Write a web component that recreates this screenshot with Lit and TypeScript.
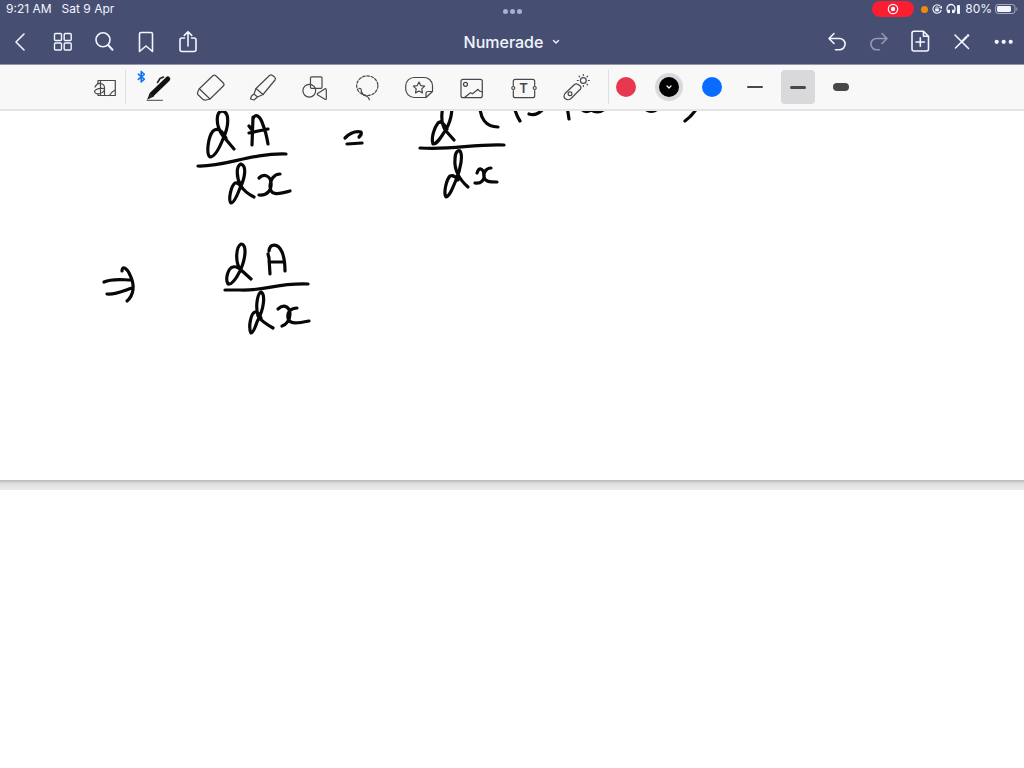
import { LitElement, html, css, svg, SVGTemplateResult } from "lit";
import { customElement, property, state } from "lit/decorators.js";

interface Item {
  label: string;
  icon: SVGTemplateResult;
  dim?: boolean;
}

const leftActions: Item[] = [
  { label: "Back", icon: svg`<path d="M24 14L16 22L24 30"/>` },
  {
    label: "Thumbnails",
    icon: svg`<g stroke-width="1.4"><rect x="12.5" y="13.5" width="7" height="7" rx="1"/><rect x="22.2" y="13.5" width="7" height="7" rx="1"/><rect x="12.5" y="23" width="7" height="7" rx="1"/><rect x="22.2" y="23" width="7" height="7" rx="1"/></g>`,
  },
  { label: "Search", icon: svg`<circle cx="19" cy="19.8" r="7"/><path d="M24 25L28.5 29.7" stroke-width="2"/>` },
  { label: "Bookmark", icon: svg`<path d="M13.5 14q0-1.5 1.5-1.5h10q1.5 0 1.5 1.5V31.5L20 26L13.5 31.5Z"/>` },
  {
    label: "Share",
    icon: svg`<path d="M16.5 18H14q-2 0-2 2V29.5q0 2 2 2H26q2 0 2-2V20q0-2-2-2H23.5M20 26V12M16.3 15.4L20 11.7L23.7 15.4"/>`,
  },
];

const rightActions: Item[] = [
  { label: "Undo", icon: svg`<path d="M18 13.5L13 18.5L18 23.5M13 18.5H23.5a5.6 5.6 0 0 1 0 11.2H19.5"/>` },
  { label: "Redo", dim: true, icon: svg`<path d="M24 13.5L29 18.500L24 23.5M29 18.5H18.500a5.6 5.6 0 0 0 0 11.2H21.5"/>` },
  {
    label: "Add page",
    icon: svg`<path d="M23.5 11.2H14q-2 0-2 2V29q0 2 2 2H26.5q2 0 2-2V16.2ZM23.5 11.5V16.2H28.3M16 22H24.5M20.300 17.8V26.2"/>`,
  },
  {
    label: "Read only",
    icon: svg`<path d="M13 15L26.5 28.5M13.5 28L24.5 17"/><path d="M20.5 21L24.5 17" stroke-width="2.200"/><circle cx="26" cy="15.5" r="1.300" fill="currentColor" stroke="none"/>`,
  },
  {
    label: "More",
    icon: svg`<g fill="currentColor" stroke="none"><circle cx="12.7" cy="21.8" r="2.1"/><circle cx="19.7" cy="21.8" r="2.1"/><circle cx="26.700" cy="21.8" r="2.1"/></g>`,
  },
];

const tools: Item[] = [
  {
    label: "Pen",
    icon: svg`<path d="M9.2 6.5V17L12.300 14.2L6.3 9.2M6.3 14.4L12.3 9.3L9.2 6.5" stroke="#1673f0" stroke-width="1.6"/>
      <path d="M35.8 14L20 29.3" stroke="#111" stroke-width="5"/><path d="M18 27.5L15 34.7L22 31.5Z" fill="#222" stroke="none"/>
      <path d="M25.5 17.500L28 13.5L31.5 12" stroke="#222" stroke-width="1.6"/><path d="M15 35.3H30.5" stroke-width="1"/>`,
  },
  {
    label: "Eraser",
    icon: svg`<path d="M28.800 10.8Q30.3 9.5 31.8 10.8L39.3 18Q40.8 19.5 39.3 21L26 34L15.3 23.7Z"/><path d="M15.3 23.7L13.7 27Q13 28.8 14.3 30L18.5 34Q20 35.3 22 35L26 34"/>`,
  },
  {
    label: "Highlighter",
    icon: svg`<path d="M33.5 10.5Q35 9.3 36.5 10.5L38.8 12.3Q40 13.5 39 15L27 29.5L20 23.5Z"/><path d="M20 23.5L18 29L21.5 32L27 29.5M18 29L15.5 31L14.5 34L18 35L21.5 32"/>`,
  },
  {
    label: "Shapes",
    icon: svg`<rect x="22.5" y="11.8" width="11.5" height="11.5" rx="1"/><circle cx="21.3" cy="25.7" r="6.4"/><path d="M29.7 28.5L37 23.8Q38.3 23.3 38.3 25V33.5Q38.3 35 37 34.3L29.8 30Q28.8 29.300 29.7 28.5Z"/>`,
  },
  {
    label: "Lasso",
    icon: svg`<ellipse cx="27.3" cy="20.7" rx="10.6" ry="9.800" stroke-dasharray="2.6 1.7"/><path d="M19 23.5Q21.500 22.5 21.300 26.500Q22 29.500 26 31Q29 32.200 29.300 34.700"/>`,
  },
  {
    label: "Stickers",
    icon: svg`<path d="M34 32.5H22A8.5 8.5 0 0 1 13.7 24V20.5A8.5 8.5 0 0 1 22 12.5H32A8.5 8.5 0 0 1 40.5 20.5V26.5L34 32.5V28.5Q34 26.5 36 26.5H40.5"/><path d="M27 17L28.7 20.6L32.7 21.1L29.8 23.9L30.5 27.9L27 26L23.5 27.9L24.2 23.9L21.3 21.1L25.3 20.6Z"/>`,
  },
  {
    label: "Image",
    icon: svg`<rect x="17" y="14.3" width="21.300" height="18.4" rx="2"/><circle cx="21.5" cy="19.3" r="2"/><path d="M20.5 32.5L26.500 27.7L28.500 28.800L34 24.300L35.5 26L38.3 27"/>`,
  },
  {
    label: "Text",
    icon: svg`<path d="M17.3 20.5V16.3q0-2 2-2H36.7q2 0 2 2V20.5M17.3 25.5V30.7q0 2 2 2H36.7q2 0 2-2V25.5"/><circle cx="17.3" cy="23" r="1.500"/><circle cx="38.7" cy="23" r="1.5"/><text x="27.500" y="28" text-anchor="middle" class="t">T</text>`,
  },
  {
    label: "Laser pointer",
    icon: svg`<path d="M26.500 19.500L17 28.500Q15 31.500 17 33.500Q19.5 35.7 22.5 34L32.500 24Q33.500 22.8 32.500 21.3L29.800 19.3Q28 18.3 26.5 19.5Z"/><circle cx="22" cy="28.7" r="1.9"/><circle cx="35.3" cy="15.5" r="2.9"/><path d="M35.3 9.500V10.5M35.3 20.5V21.5M29.3 15.5H30.3M40.3 15.5H41.3M31 11.2L31.7 11.9M38.9 19.1L39.6 19.8M39.6 11.2L38.9 11.9"/>`,
  },
];

const strokes: string[] = [
  // first line, left fraction
  "M234 149L223 136C215 125 216 112 222 111C230 112 229 126 223 139C219 149 214 157 210 157C206 154 208 137 213 131C218 127 222 131 226 138",
  "M252 145L253 117M249 126L252 130M253 119C255 113 260 115 263 125C266 132 267 138 268 144M249 133L268 129",
  "M198 166C225 167 250 153 286 154",
  "M254 197C248 194 244 191 241 186C236 177 236 166 241 164C247 166 245 178 240 188C237 196 234 203 231 203C228 200 231 186 235 183C238 182 240 185 242 188",
  "M259 178C264 173 270 176 271 182C272 190 267 196 259 195M280 174C274 174 270 180 270 186C270 195 276 195 290 191",
  "M345 138C350 133 356 131 361 132C362 134 361 135 359 137M347 144L362 143",
  // first line, right fraction and the bracket that scrolls out at the top
  "M454 140L446 131C441 125 441 116 443 106M452 106C452 117 449 125 445 131C440 139 437 144 433 144C431 138 434 128 438 123C441 120 444 124 447 129",
  "M420 148C455 150 470 144 504 145",
  "M468 187C460 180 454 170 455 159C455 152 458 150 460 151C463 155 461 168 456 180C453 187 450 196 446 197C443 192 447 179 450 176C453 175 456 177 458 180",
  "M477 173C479 167 483 168 484 174C485 180 481 184 475 183M491 168C486 168 483 173 484 177C485 182 490 182 497 182",
  "M480 106C480 117 485 127 498 127M514 106Q516 115 520 121M529 114Q537 117 545 107M567 106L569 119M580 107Q584 114 591 110Q599 115 607 107M645 109Q652 114 659 108Q667 107 673 108M697 108Q692 116 685 121",
  // second line
  "M104 282C113 278 123 280 131 280M107 294C115 295 123 291 132 288M122 271C122 265 127 268 130 275C135 285 134 295 127 301",
  "M251 279L240 269C235 261 236 247 241 244C247 244 246 258 240 271C236 279 232 285 228 284C225 279 228 268 233 267C236 266 239 268 242 271",
  "M270 274L269 258L268 254M269 251C270 243 278 243 282 252C285 259 285 265 285 271M269 262L284 262",
  "M225 290L240 290C265 291 275 283 308 284",
  "M273 328C266 324 261 321 258 316C255 305 258 293 261 292C265 294 265 307 257 322C255 328 253 333 251 333C248 327 251 313 255 312C257 311 259 314 261 318",
  "M278 309C285 303 290 308 290 314C290 320 286 325 282 326M297 308C290 308 287 313 288 318C289 325 299 323 309 321",
];

const colours = [
  { name: "Red", value: "#e8384f" },
  { name: "Black", value: "#000000" },
  { name: "Blue", value: "#0a6cff" },
];

@customElement("status-bar")
class StatusBar extends LitElement {
  static styles = css`
    :host {
      display: grid;
      grid-template-columns: 1fr auto 1fr;
      align-items: center;
      height: 18px;
      padding: 0 6px 2px;
      font-size: 12px;
      line-height: 16px;
      font-weight: 400;
    }
    .when { display: flex; gap: 10px; }
    .dots { display: flex; gap: 2px; padding-top: 5px; }
    .dot { width: 5px; height: 5px; border-radius: 50%; background: #a7b0d5; }
    .system { display: flex; justify-content: flex-end; align-items: center; gap: 4px; }
    .record {
      display: grid;
      place-items: center;
      width: 42px;
      height: 16px;
      margin-right: 3px;
      border-radius: 8px;
      background: #fa1e30;
    }
    .mic { width: 7px; height: 7px; border-radius: 50%; background: #f08a0c; }
    .charge { display: flex; align-items: center; gap: 3px; }
    svg { display: block; fill: none; stroke: currentColor; }
  `;
  render() {
    return html`
      <div class="when"><span>9:21 AM</span><span>Sat 9 Apr</span></div>
      <div class="dots"><i class="dot"></i><i class="dot"></i><i class="dot"></i></div>
      <div class="system">
        <span class="record"><svg width="12" height="12"><circle cx="6" cy="6" r="4.7" stroke-width="1.2"/><circle cx="6" cy="6" r="2.2" fill="currentColor" stroke="none"/></svg></span>
        <i class="mic"></i>
        <svg width="10" height="12" viewBox="0 0 10 12"><path d="M8.5 3.5A4.2 4.2 0 1 0 9.2 7M7.5 4.5L9.5 5L9.7 3" stroke-width="1.1"/><rect x="3.2" y="5.5" width="3.6" height="2.8" fill="currentColor" stroke="none"/><path d="M4 5.5V4.7a1 1 0 0 1 2 0V5.5" stroke-width=".8"/></svg>
        <svg width="15" height="12" viewBox="0 0 15 12"><path d="M2.5 10Q.8 8 1 5.500A4 4 0 0 1 9 5.5Q9.2 8 7.5 10" stroke-width="1.3"/><path d="M3 6.8V10M7 6.8V10" stroke-width="2"/><rect x="11" y="2" width="3" height="9" rx="1" fill="currentColor" stroke="none"/></svg>
        <span class="charge">80%<svg width="23" height="12" viewBox="0 0 23 12"><rect x=".6" y="1.500" width="19.4" height="9" rx="2.6" stroke-opacity=".55"/><rect x="2" y="3" width="14" height="6" rx="1.4" fill="currentColor" stroke="none"/><path d="M21.8 4.5V7.5" stroke-opacity=".55"/></svg></span>
      </div>`;
  }
}

@customElement("nav-bar")
class NavBar extends LitElement {
  static styles = css`
    :host {
      display: grid;
      grid-template-columns: 1fr auto 1fr;
      align-items: center;
      height: 44px;
    }
    .group { display: flex; gap: 2px; }
    .end { justify-content: flex-end; }
    button { padding: 0; border: 0; background: none; color: inherit; font: inherit; }
    .action { width: 40px; height: 44px; }
    .dim { opacity: 0.45; }
    svg { display: block; fill: none; stroke: currentColor; stroke-width: 1.6; stroke-linecap: round; stroke-linejoin: round; }
    .title { display: flex; align-items: center; gap: 9px; font-size: 16px; line-height: 20px; font-weight: 500; }
  `;
  private action(item: Item) {
    return html`<button class="action ${item.dim ? "dim" : ""}" aria-label=${item.label}>
      <svg width="40" height="44">${item.icon}</svg>
    </button>`;
  }
  render() {
    return html`
      <div class="group">${leftActions.map((i) => this.action(i))}</div>
      <button class="title">Numerade<svg width="8" height="6"><path d="M1.5 1.5L4 4L6.5 1.5" stroke-width="1.4"/></svg></button>
      <div class="group end">${rightActions.map((i) => this.action(i))}</div>`;
  }
}

@customElement("tool-bar")
class ToolBar extends LitElement {
  @state() private colour = "Black";
  @state() private width = 3;
  static styles = css`
    :host {
      display: flex;
      align-items: center;
      height: 44px;
      padding-left: 87px;
      background: #f8f8f9;
      border-bottom: 2px solid #e4e4e6;
      color: #48484a;
    }
    button { display: grid; place-items: center; flex: none; padding: 0; border: 0; background: none; color: inherit; }
    svg { display: block; fill: none; stroke: currentColor; stroke-width: 1.2; stroke-linecap: round; stroke-linejoin: round; }
    .t { font: 600 13px Inter, sans-serif; fill: currentColor; stroke: none; }
    .rule { flex: none; width: 1px; height: 34px; background: #dedee0; }
    .tools { display: flex; padding: 0 8px 0 6px; }
    .first { margin-right: 2px; }
    .options { display: flex; gap: 9px; }
    .option { width: 34px; height: 34px; border-radius: 4px; }
    .picked { background: #d9d9db; }
    .ring { width: 28px; height: 28px; border-radius: 50%; display: grid; place-items: center; }
    .swatch { width: 20px; height: 20px; border-radius: 50%; display: grid; place-items: center; color: #fff; }
    .line { width: 16px; border-radius: 4px; background: #48484a; }
  `;
  render() {
    return html`
      <button class="first" aria-label="Zoom window">
        <svg width="36" height="44"><path d="M11 19V15.500H28.300V30.500H11V28.500M28 25Q25 26.500 22.500 30.500M8 22Q10 18 13.500 18.500Q17.5 19 17.5 23V30.500M17.5 23.5Q9 22.500 7.5 26.5Q8 29.5 13 28.5Q17 27.5 17.5 24M13.5 16V30"/></svg>
      </button>
      <span class="rule"></span>
      <div class="tools">
        ${tools.map((t) => html`<button aria-label=${t.label}><svg width="52" height="44">${t.icon}</svg></button>`)}
      </div>
      <span class="rule"></span>
      <div class="options">
        ${colours.map(
          (c) => html`<button class="option" aria-label=${c.name} @click=${() => (this.colour = c.name)}>
            <span class="ring ${c.name === this.colour ? "picked" : ""}"><span class="swatch" style="background:${c.value}">
              ${c.name === this.colour ? html`<svg width="6" height="4"><path d="M1 1L3 3L5 1"/></svg>` : ""}</span></span>
          </button>`,
        )}
        ${[2, 3, 8].map(
          (w) => html`<button class="option ${w === this.width ? "picked" : ""}" aria-label="Stroke ${w}" @click=${() => (this.width = w)}>
            <span class="line" style="height:${w}px"></span>
          </button>`,
        )}
      </div>`;
  }
}

@customElement("note-page")
class NotePage extends LitElement {
  @property({ attribute: false }) ink: string[] = [];
  static styles = css`
    :host { display: block; background: #fff; overflow: hidden; }
    svg { display: block; fill: none; stroke: #080808; stroke-width: 3.2; stroke-linecap: round; stroke-linejoin: round; }
  `;
  render() {
    return this.ink.length
      ? html`<svg width="720" height="369" viewBox="0 111 720 369" role="img" aria-label="Handwritten derivative of A with respect to x">
          ${this.ink.map((d) => svg`<path d=${d}/>`)}
        </svg>`
      : "";
  }
}

@customElement("app-root")
class AppRoot extends LitElement {
  static styles = css`
    :host {
      display: flex;
      flex-direction: column;
      min-height: 100vh;
      background: #fff;
      font-family: Inter, "Liberation Sans", sans-serif;
    }
    header { background: #464f72; color: #f2f5ff; border-bottom: 1px solid #9597a9; }
    main { display: flex; flex-direction: column; flex: 1; }
    .gap { height: 10px; background: linear-gradient(#b6b8b8, #dedfdf 35%, #ececec); }
    .next { flex: 1; }
  `;
  render() {
    return html`
      <header><status-bar></status-bar><nav-bar></nav-bar></header>
      <tool-bar></tool-bar>
      <main>
        <note-page .ink=${strokes}></note-page>
        <div class="gap"></div>
        <note-page class="next"></note-page>
      </main>`;
  }
}
